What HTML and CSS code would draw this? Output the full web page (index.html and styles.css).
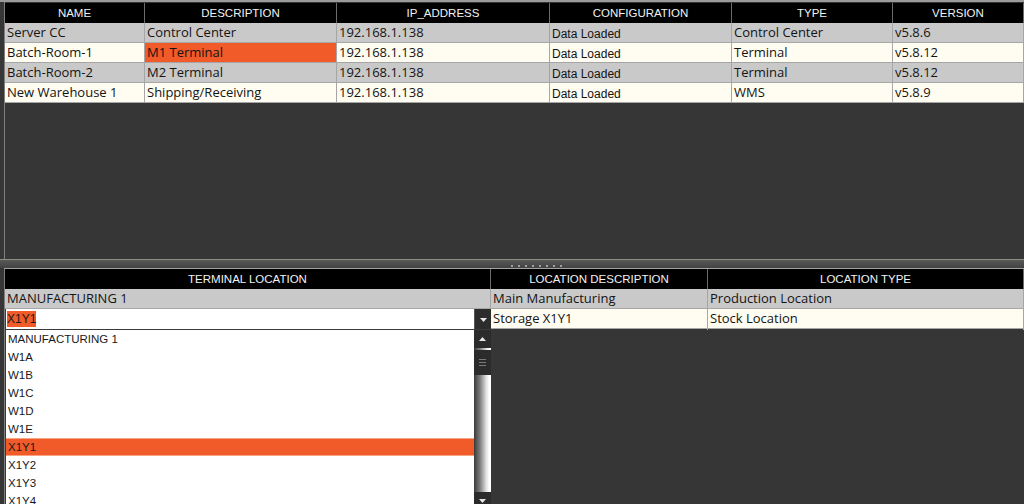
FILE: index.html
```html
<!DOCTYPE html>
<html lang="en">
<head>
<meta charset="utf-8">
<title>Terminals</title>
<link rel="stylesheet" href="styles.css">
</head>
<body>
<div class="app">
  <section class="pane pane-top">
    <div class="table table-top">
      <div class="row head">
        <div class="cell">NAME</div>
        <div class="cell">DESCRIPTION</div>
        <div class="cell">IP_ADDRESS</div>
        <div class="cell">CONFIGURATION</div>
        <div class="cell">TYPE</div>
        <div class="cell">VERSION</div>
      </div>
      <div class="row body-row gray">
        <div class="cell">Server CC</div>
        <div class="cell">Control Center</div>
        <div class="cell">192.168.1.138</div>
        <div class="cell arial">Data Loaded</div>
        <div class="cell">Control Center</div>
        <div class="cell">v5.8.6</div>
      </div>
      <div class="row body-row cream">
        <div class="cell">Batch-Room-1</div>
        <div class="cell hl">M1 Terminal</div>
        <div class="cell">192.168.1.138</div>
        <div class="cell arial">Data Loaded</div>
        <div class="cell">Terminal</div>
        <div class="cell">v5.8.12</div>
      </div>
      <div class="row body-row gray">
        <div class="cell">Batch-Room-2</div>
        <div class="cell">M2 Terminal</div>
        <div class="cell">192.168.1.138</div>
        <div class="cell arial">Data Loaded</div>
        <div class="cell">Terminal</div>
        <div class="cell">v5.8.12</div>
      </div>
      <div class="row body-row cream">
        <div class="cell">New Warehouse 1</div>
        <div class="cell">Shipping/Receiving</div>
        <div class="cell">192.168.1.138</div>
        <div class="cell arial">Data Loaded</div>
        <div class="cell">WMS</div>
        <div class="cell">v5.8.9</div>
      </div>
    </div>
  </section>

  <div class="splitter">
    <span class="dot"></span><span class="dot"></span><span class="dot"></span><span class="dot"></span>
    <span class="dot"></span><span class="dot"></span><span class="dot"></span><span class="dot"></span>
  </div>

  <section class="pane pane-bottom">
    <div class="table table-bottom">
      <div class="row head">
        <div class="cell">TERMINAL LOCATION</div>
        <div class="cell">LOCATION DESCRIPTION</div>
        <div class="cell">LOCATION TYPE</div>
      </div>
      <div class="row body-row gray">
        <div class="cell">MANUFACTURING 1</div>
        <div class="cell">Main Manufacturing</div>
        <div class="cell">Production Location</div>
      </div>
      <div class="row body-row cream">
        <div class="cell combo">
          <div class="combo-input"><span class="sel">X1Y1</span></div>
          <div class="combo-btn">
            <svg width="7" height="4" viewBox="0 0 7 4"><polygon points="0,0 7,0 3.5,4" fill="#e6e6e6"/></svg>
          </div>
          <div class="dropdown">
            <ul class="list">
              <li>MANUFACTURING 1</li>
              <li>W1A</li>
              <li>W1B</li>
              <li>W1C</li>
              <li>W1D</li>
              <li>W1E</li>
              <li class="active">X1Y1</li>
              <li>X1Y2</li>
              <li>X1Y3</li>
              <li>X1Y4</li>
            </ul>
            <div class="scroll">
              <div class="sbtn">
                <svg width="7" height="4" viewBox="0 0 7 4"><polygon points="0,4 7,4 3.5,0" fill="#e6e6e6"/></svg>
              </div>
              <div class="thumb">
                <span class="grip"></span><span class="grip"></span><span class="grip"></span>
              </div>
              <div class="track"></div>
              <div class="sbtn">
                <svg width="7" height="4" viewBox="0 0 7 4"><polygon points="0,0 7,0 3.5,4" fill="#e6e6e6"/></svg>
              </div>
            </div>
          </div>
        </div>
        <div class="cell">Storage X1Y1</div>
        <div class="cell">Stock Location</div>
      </div>
    </div>
  </section>
</div>
</body>
</html>
```

FILE: styles.css
```css
* { box-sizing: border-box; }

html, body {
  margin: 0;
  padding: 0;
}

body {
  width: 1024px;
  height: 504px;
  overflow: hidden;
  background: #363636;
  font-family: "Open Sans", "Noto Sans", sans-serif;
}

.app {
  height: 504px;
  display: flex;
  flex-direction: column;
  border-top: 2px solid #9b9b9b;
}

.pane {
  margin-left: 4px;
  border-left: 1px solid #7e7e7e;
  background: #363636;
}

.pane-top {
  height: 257px;
  padding-top: 1px;
}

.splitter {
  height: 9px;
  border-top: 1px solid #8d8c85;
  background: linear-gradient(#595959, #424242);
  display: flex;
  align-items: center;
  gap: 5px;
  padding-left: 511px;
  padding-top: 3px;
}

.dot {
  width: 2px;
  height: 2px;
  background: #9f9f9f;
}

.pane-bottom {
  flex: 1;
  border-top: 1px solid #a2a2a2;
}

.table-top { --cols: 140px 192px 213px 182px 161px 1fr; }
.table-bottom { --cols: 486px 217px 1fr; }

.row {
  display: grid;
  grid-template-columns: var(--cols);
  height: 20px;
}

.head { background: #000; }

.head .cell {
  color: #f2f2f2;
  font-family: "Liberation Sans", Arial, sans-serif;
  font-size: 11.5px;
  line-height: 20px;
  text-align: center;
  border-right: 1px solid #6c6c6c;
  white-space: nowrap;
}

.body-row { border-bottom: 1px solid #a6a6a6; }

.body-row .cell {
  border-right: 1px solid #a6a6a6;
  padding-left: 2px;
  font-size: 13px;
  line-height: 19px;
  color: #141414;
  white-space: nowrap;
  overflow: hidden;
}

.gray { background: #c9c9c9; }
.cream { background: #fffdf1; }

.body-row .cell.hl { background: #f15a29; }

.body-row .cell.arial {
  font-family: "Liberation Sans", Arial, sans-serif;
  font-size: 12px;
  padding-top: 2px;
}

/* combo box */
.body-row .cell.combo {
  position: relative;
  display: flex;
  padding: 0;
  overflow: visible;
  border-right: 0;
}

.combo-input {
  flex: 1;
  background: #fff;
  border-left: 1px solid #3c3c3c;
  padding-left: 1px;
  padding-top: 2px;
}

.sel {
  display: inline-block;
  background: #f15a29;
  color: #1a1a1a;
  font-family: "Liberation Sans", Arial, sans-serif;
  font-size: 12px;
  line-height: 16px;
  vertical-align: top;
}

.combo-btn {
  width: 17px;
  background: #2c2c2c;
  border-left: 1px solid #555;
  display: flex;
  align-items: center;
  justify-content: center;
}

.dropdown {
  position: absolute;
  top: 20px;
  left: 0;
  width: 486px;
  height: 181px;
  display: flex;
  background: #fff;
  border-top: 1px solid #3a3a3a;
  border-left: 1px solid #3a3a3a;
  z-index: 2;
}

.list {
  flex: 1;
  margin: 0;
  padding: 0;
  list-style: none;
  overflow: hidden;
}

.list li {
  height: 18px;
  line-height: 18px;
  padding-left: 2px;
  font-family: "Liberation Sans", Arial, sans-serif;
  font-size: 11.5px;
  color: #1a1a1a;
}

.list li.active {
  background: #f15a29;
  box-shadow: inset 0 1px 0 #f6a283, inset 0 -1px 0 #f6a283;
}

.scroll {
  width: 17px;
  display: flex;
  flex-direction: column;
  background: linear-gradient(to right, #3a3a3a 0%, #7d7d7d 35%, #e8e8e8 75%, #ffffff 90%);
}

.sbtn {
  height: 18px;
  flex: none;
  background: #2b2b2b;
  display: flex;
  align-items: center;
  justify-content: center;
}

.thumb {
  height: 25px;
  flex: none;
  margin-top: 2px;
  background: #2b2b2b;
  display: flex;
  flex-direction: column;
  align-items: center;
  justify-content: center;
  gap: 2px;
}

.grip {
  width: 7px;
  height: 1px;
  background: #7a7a7a;
}

.track { flex: 1; }
```
